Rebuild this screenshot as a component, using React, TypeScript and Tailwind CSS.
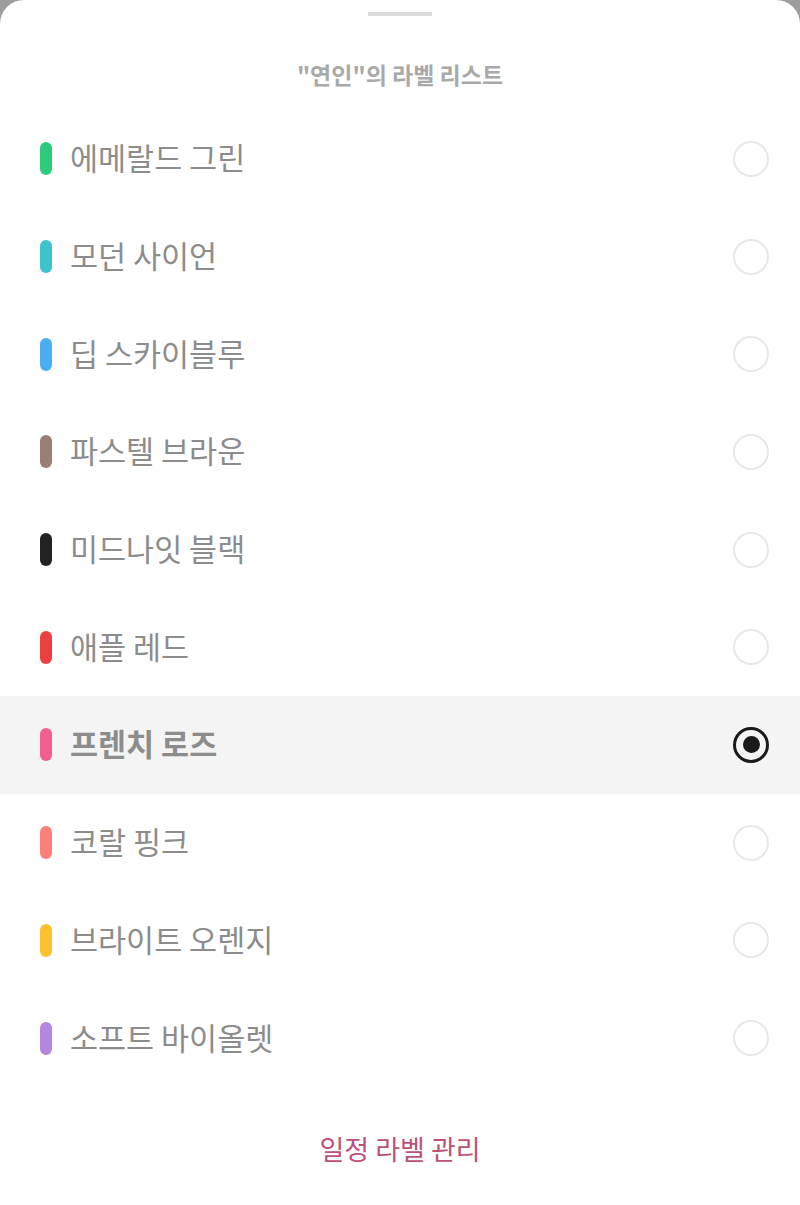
const LABELS = [
  { name: "에메랄드 그린", color: "bg-[#2fcb7c]" },
  { name: "모던 사이언", color: "bg-[#3cc3cc]" },
  { name: "딥 스카이블루", color: "bg-[#4aaef2]" },
  { name: "파스텔 브라운", color: "bg-[#9a7f77]" },
  { name: "미드나잇 블랙", color: "bg-[#222222]" },
  { name: "애플 레드", color: "bg-[#ec4040]" },
  { name: "프렌치 로즈", color: "bg-[#f25e8d]" },
  { name: "코랄 핑크", color: "bg-[#fc8078]" },
  { name: "브라이트 오렌지", color: "bg-[#fcc12f]" },
  { name: "소프트 바이올렛", color: "bg-[#b486e0]" },
];

const SELECTED = 6;

function Radio({ checked }: { checked: boolean }) {
  if (checked) {
    return (
      <div className="flex h-[36px] w-[36px] items-center justify-center rounded-full border-[3px] border-[#1a1a1a]">
        <div className="h-[17px] w-[17px] rounded-full bg-[#1a1a1a]" />
      </div>
    );
  }
  return <div className="h-[36px] w-[36px] rounded-full border-2 border-[#e8e8e8]" />;
}

export default function App() {
  return (
    <div className="min-h-[1205px] bg-[#9e9e9e]" style={{ fontFamily: '"Noto Sans CJK KR", "Noto Sans", sans-serif' }}>
      <div className="flex min-h-[1205px] flex-col rounded-t-[24px] bg-white">
        <div className="mx-auto mt-3 h-1 w-16 bg-[#dcdcdc]" />
        <div className="pb-[22px] pt-[44px] text-center text-[23px] font-bold leading-[28px] text-[#a9a9a9]">
          "연인"의 라벨 리스트
        </div>
        <div className="flex flex-col">
          {LABELS.map((l, i) => {
            const sel = i === SELECTED;
            return (
              <div
                key={l.name}
                className={`flex h-[97.7px] items-center pl-[40px] pr-[31px] ${sel ? "bg-[#f4f4f4]" : ""}`}
              >
                <div className={`h-[33px] w-[12px] rounded-full ${l.color}`} />
                <span
                  className={`ml-[18px] flex-1 pb-[3px] text-[30.5px] leading-[36px] text-[#8c8c8c] ${sel ? "font-bold" : ""}`}
                >
                  {l.name}
                </span>
                <Radio checked={sel} />
              </div>
            );
          })}
        </div>
        <div className="pt-[48px] text-center text-[27px] leading-[28px] text-[#bd5079]">일정 라벨 관리</div>
      </div>
    </div>
  );
}
